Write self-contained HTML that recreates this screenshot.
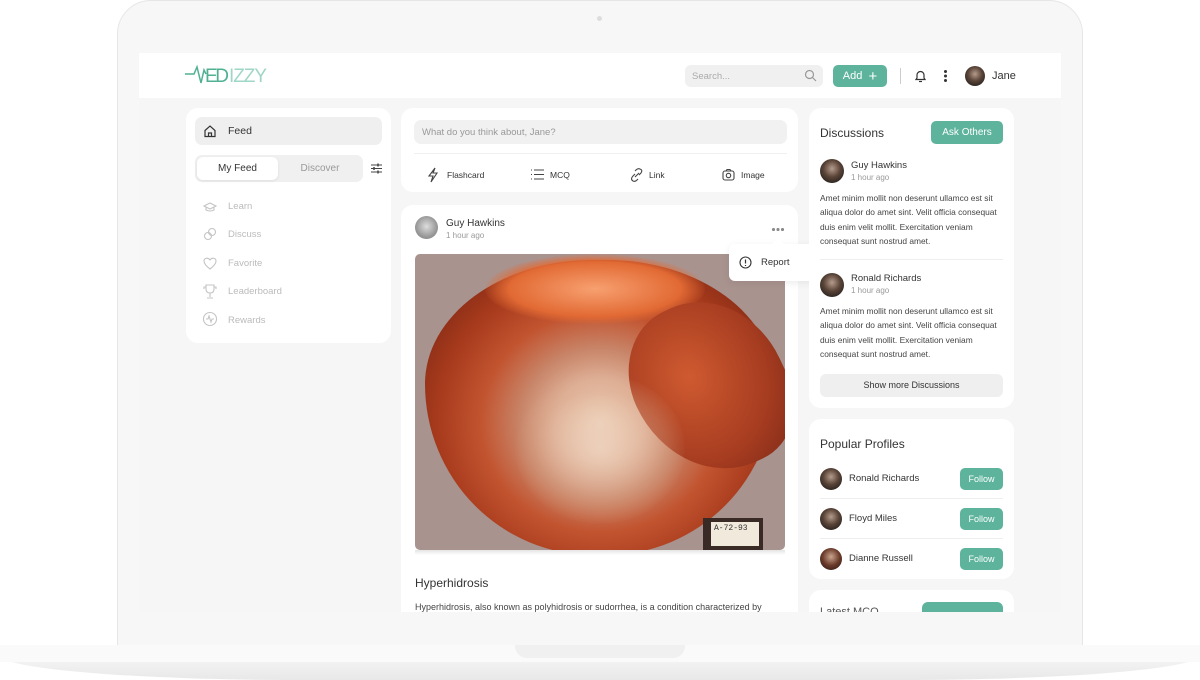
<!DOCTYPE html>
<html><head><meta charset="utf-8"><style>
*{box-sizing:border-box;margin:0;padding:0}
body{width:1200px;height:680px;background:#fff;position:relative;overflow:hidden;font-family:"Liberation Sans",sans-serif;color:#333}
.a{position:absolute}
.card{position:absolute;background:#fff;border-radius:12px}
.g{color:#bbb;font-size:9.5px}
.btn{position:absolute;background:#5db39b;color:#fff;border-radius:5px;font-size:10px;display:flex;align-items:center;justify-content:center}
.av{position:absolute;border-radius:50%;background:radial-gradient(circle at 50% 40%,#b59c8c 0,#5a4438 45%,#2c2420 80%)}
.t9{font-size:9px;line-height:14.3px;color:#444}
svg{position:absolute}
</style></head><body>
<div class="a" style="left:117px;top:0;width:966px;height:660px;background:#f7f7f7;border:1px solid #e6e6e6;border-radius:34px 34px 0 0"></div>
<div class="a" style="left:597px;top:16px;width:5px;height:5px;border-radius:50%;background:#ddd"></div>
<div class="a" style="left:0;top:645px;width:1200px;height:35px;background:linear-gradient(#fbfbfb,#f0f0f0 60%,#e8e8e8);border-radius:0 0 300px 300px/0 0 25px 25px"></div>
<div class="a" style="left:0;top:645px;width:1200px;height:17px;background:#fafafa"></div>
<div class="a" style="left:515px;top:645px;width:170px;height:13px;background:#f0f0f0;border-radius:0 0 12px 12px"></div>
<div class="a" style="left:139px;top:53px;width:922px;height:559px;background:#f6f6f6;overflow:hidden">
 <div class="a" style="left:0;top:0;width:922px;height:45px;background:#fff"></div>
</div>
<svg style="left:184px;top:64px" width="86" height="22" viewBox="0 0 86 22"><path d="M1 10H10L13 3L17 19L20 6L22 10" fill="none" stroke="#4fb092" stroke-width="1.5"/>
<text x="21" y="18" font-size="19" fill="#4fb092" font-family="Liberation Sans" textLength="24">ED</text><text x="45" y="18" font-size="19" fill="#9fd6c6" font-family="Liberation Sans" textLength="38">IZZY</text></svg>
<div class="a" style="left:685px;top:65px;width:138px;height:22px;background:#f0f0f0;border-radius:6px;font-size:9.5px;color:#aaa;padding:6px 7px">Search...</div>
<svg style="left:804px;top:69px" width="13" height="13" viewBox="0 0 13 13"><circle cx="5.5" cy="5.5" r="4" fill="none" stroke="#999" stroke-width="1.2"/><path d="M8.5 8.5L12 12" stroke="#999" stroke-width="1.2"/></svg>
<div class="btn" style="left:833px;top:65px;width:54px;height:22px;font-size:11px;border-radius:5px">Add&nbsp;&nbsp;<span style="font-size:15px;line-height:1">+</span></div>
<div class="a" style="left:900px;top:68px;width:1px;height:16px;background:#ccc"></div>
<svg style="left:914px;top:69px" width="13" height="14" viewBox="0 0 13 14"><path d="M2 10.5H11L10 9V6A3.5 3.5 0 0 0 3 6V9Z" fill="none" stroke="#333" stroke-width="1.2"/><path d="M5 12.5H8" stroke="#333" stroke-width="1.2"/></svg>
<div class="a" style="left:944px;top:70px;width:3px;height:3px;border-radius:50%;background:#333;box-shadow:0 4.5px #333,0 9px #333"></div>
<div class="av" style="left:965px;top:66px;width:20px;height:20px"></div>
<div class="a" style="left:992px;top:70px;font-size:11px;color:#333">Jane</div>
<div class="card" style="left:186px;top:108px;width:205px;height:235px"></div>
<div class="a" style="left:195px;top:117px;width:187px;height:28px;background:#efefef;border-radius:7px"></div>
<svg style="left:203px;top:124px" width="14" height="14" viewBox="0 0 14 14"><path d="M2 6.5L7 2L12 6.5V12.5H2Z M5.5 12.5V9H8.5V12.5" fill="none" stroke="#333" stroke-width="1.2"/></svg>
<div class="a" style="left:228px;top:125px;font-size:10.5px;color:#333">Feed</div>
<div class="a" style="left:195px;top:155px;width:168px;height:27px;background:#f0f0f0;border-radius:7px"></div>
<div class="a" style="left:197px;top:157px;width:81px;height:23px;background:#fff;border-radius:6px;box-shadow:0 1px 3px rgba(0,0,0,.08);font-size:10px;text-align:center;line-height:23px;color:#333">My Feed</div>
<div class="a" style="left:280px;top:163px;width:80px;text-align:center;font-size:10px;color:#999">Discover</div>
<svg style="left:370px;top:162px" width="13" height="13" viewBox="0 0 13 13" stroke="#444" stroke-width="1.1"><path d="M1 3H12M1 6.5H12M1 10H12"/><path d="M8 1.5V4.5M4 5V8M8 8.5V11.5" stroke-width="1.5"/></svg>
<div class="a g" style="left:228px;top:201px">Learn</div>
<div class="a g" style="left:228px;top:229px">Discuss</div>
<div class="a g" style="left:228px;top:258px">Favorite</div>
<div class="a g" style="left:228px;top:286px">Leaderboard</div>
<div class="a g" style="left:228px;top:315px">Rewards</div>
<svg style="left:202px;top:198px" width="16" height="130" viewBox="0 0 16 130" fill="none" stroke="#c4c4c4" stroke-width="1.1"><path d="M2 8L8 5L14 8L8 11Z M4 9V12Q8 14 12 12V9"/><circle cx="6" cy="38" r="3.5"/><circle cx="10" cy="34" r="3.5"/><path d="M8 71C4 68 2 65 2 63C2 60 6 59 8 62C10 59 14 60 14 63C14 65 12 68 8 71Z"/><path d="M4 87H12V91Q12 95 8 95Q4 95 4 91Z M8 95V99M5 100H11M4 89H2V91M12 89H14V91"/><circle cx="8" cy="121" r="6.5"/><path d="M4 121H6L7 118L9 124L10 121H12"/></svg>
<div class="card" style="left:401px;top:108px;width:397px;height:84px"></div>
<div class="a" style="left:414px;top:120px;width:373px;height:24px;background:#f1f1f1;border-radius:7px;font-size:9.5px;color:#999;padding:7px 8px">What do you think about, Jane?</div>
<div class="a" style="left:414px;top:153px;width:373px;height:1px;background:#f0f0f0"></div>
<div class="a" style="font-size:8.5px;color:#333;top:170px;left:447px">Flashcard</div>
<div class="a" style="font-size:8.5px;color:#333;top:170px;left:550px">MCQ</div>
<div class="a" style="font-size:8.5px;color:#333;top:170px;left:649px">Link</div>
<div class="a" style="font-size:8.5px;color:#333;top:170px;left:741px">Image</div>
<svg style="left:426px;top:167px" width="330" height="16" viewBox="0 0 330 16" fill="none" stroke="#444" stroke-width="1.1"><path d="M9 1L3 9H7L5 15L11 6H7Z"/><path d="M108 3H118M108 7.5H118M108 12H118M105 3H106M105 7.5H106M105 12H106"/><path d="M209 7L207 9Q204 12 207 14Q209 15 211 13L212 12M213 8L215 6Q217 3 214 2Q212 1 210 3L209 4M209 10L213 6"/><rect x="297" y="4" width="11" height="9" rx="2"/><circle cx="302.5" cy="8.5" r="2.2"/><path d="M300 4L301 2.5H304L305 4"/></svg>
<div class="a" style="left:401px;top:205px;width:397px;height:407px;background:#fff;border-radius:12px 12px 0 0"></div>
<div class="av" style="left:415px;top:216px;width:23px;height:23px;background:radial-gradient(circle at 50% 45%,#ddd 0,#999 60%,#777 100%)"></div>
<div class="a" style="left:446px;top:218px;font-size:10px;color:#333">Guy Hawkins</div>
<div class="a" style="left:446px;top:231px;font-size:8px;color:#999">1 hour ago</div>
<div class="a" style="left:772px;top:228px;width:2.5px;height:2.5px;border-radius:50%;background:#888;box-shadow:4.5px 0 #888,9px 0 #888"></div>
<div class="a" style="left:415px;top:254px;width:370px;height:296px;border-radius:5px;overflow:hidden;background:#a9938f">
 <div class="a" style="left:10px;top:6px;width:350px;height:295px;border-radius:48% 48% 48% 48%/42% 42% 58% 58%;background:radial-gradient(ellipse at 50% 55%,#f0d6c0 0,#dfb299 18%,#c88569 32%,#c25430 48%,#a73a1c 66%,#6e2212 92%)"></div>
 <div class="a" style="left:70px;top:0;width:220px;height:70px;border-radius:50%;background:radial-gradient(#f7a070,#e26a34 55%,transparent 72%)"></div>
 <div class="a" style="left:220px;top:45px;width:150px;height:175px;border-radius:45% 55% 40% 60%;background:radial-gradient(ellipse at 40% 40%,#cf5a30,#a63c20 60%,#762616);transform:rotate(-25deg)"></div>
 <div class="a" style="left:100px;top:120px;width:170px;height:150px;border-radius:50%;background:radial-gradient(rgba(240,215,195,.7),rgba(220,170,140,.3) 55%,transparent 72%)"></div>
 <div class="a" style="left:288px;top:264px;width:60px;height:32px;background:#3a2a26"></div>
 <div class="a" style="left:296px;top:268px;width:48px;height:24px;background:#f1e9dc;font-size:8px;color:#333;padding:2px 3px;font-family:'Liberation Mono',monospace">A-72-93</div>
</div>
<div class="a" style="left:415px;top:550px;width:370px;height:5px;background:linear-gradient(#e4e4e4,#fff)"></div>
<div class="a" style="left:415px;top:576px;font-size:12px;color:#333">Hyperhidrosis</div>
<div class="a" style="left:415px;top:602px;width:370px;height:10px;overflow:hidden;font-size:9px;color:#444;white-space:nowrap">Hyperhidrosis, also known as polyhidrosis or sudorrhea, is a condition characterized by</div>
<div class="a" style="left:729px;top:244px;width:99px;height:37px;background:#fff;border-radius:6px;box-shadow:0 2px 8px rgba(0,0,0,.08)"></div>
<div class="a" style="left:774px;top:240px;width:8px;height:8px;background:#fff;transform:rotate(45deg)"></div>
<svg style="left:739px;top:256px" width="13" height="13" viewBox="0 0 13 13"><circle cx="6.5" cy="6.5" r="5.5" fill="none" stroke="#333" stroke-width="1.1"/><path d="M6.5 3.5V7.5M6.5 9V10" stroke="#333" stroke-width="1.2"/></svg>
<div class="a" style="left:761px;top:257px;font-size:9.5px;color:#333">Report</div>
<div class="card" style="left:809px;top:108px;width:205px;height:300px"></div>
<div class="a" style="left:820px;top:126px;font-size:12px;color:#333">Discussions</div>
<div class="btn" style="left:931px;top:121px;width:72px;height:23px;font-size:10px">Ask Others</div>
<div class="av" style="left:820px;top:159px;width:24px;height:24px"></div>
<div class="a" style="left:851px;top:160px;font-size:9.5px;color:#333">Guy Hawkins</div>
<div class="a" style="left:851px;top:173px;font-size:8px;color:#999">1 hour ago</div>
<div class="a t9" style="left:820px;top:191px;width:190px;font-size:8.4px">Amet minim mollit non deserunt ullamco est sit aliqua dolor do amet sint. Velit officia consequat duis enim velit mollit. Exercitation veniam consequat sunt nostrud amet.</div>
<div class="a" style="left:820px;top:259px;width:183px;height:1px;background:#eee"></div>
<div class="av" style="left:820px;top:273px;width:24px;height:24px"></div>
<div class="a" style="left:851px;top:273px;font-size:9.5px;color:#333">Ronald Richards</div>
<div class="a" style="left:851px;top:286px;font-size:8px;color:#999">1 hour ago</div>
<div class="a t9" style="left:820px;top:304px;width:190px;font-size:8.4px">Amet minim mollit non deserunt ullamco est sit aliqua dolor do amet sint. Velit officia consequat duis enim velit mollit. Exercitation veniam consequat sunt nostrud amet.</div>
<div class="a" style="left:820px;top:374px;width:183px;height:23px;background:#efefef;border-radius:6px;font-size:9px;color:#333;text-align:center;line-height:23px">Show more Discussions</div>
<div class="card" style="left:809px;top:419px;width:205px;height:160px"></div>
<div class="a" style="left:820px;top:437px;font-size:12px;color:#333">Popular Profiles</div>
<div class="av" style="left:820px;top:468px;width:22px;height:22px"></div>
<div class="a" style="left:849px;top:473px;font-size:9.5px;color:#333">Ronald Richards</div>
<div class="btn" style="left:960px;top:468px;width:43px;height:22px;font-size:9px">Follow</div>
<div class="a" style="left:820px;top:498px;width:183px;height:1px;background:#eee"></div>
<div class="av" style="left:820px;top:508px;width:22px;height:22px"></div>
<div class="a" style="left:849px;top:513px;font-size:9.5px;color:#333">Floyd Miles</div>
<div class="btn" style="left:960px;top:508px;width:43px;height:22px;font-size:9px">Follow</div>
<div class="a" style="left:820px;top:538px;width:183px;height:1px;background:#eee"></div>
<div class="av" style="left:820px;top:548px;width:22px;height:22px;background:radial-gradient(circle at 50% 40%,#caa58e 0,#6b3b2a 50%,#3a2018 85%)"></div>
<div class="a" style="left:849px;top:553px;font-size:9.5px;color:#333">Dianne Russell</div>
<div class="btn" style="left:960px;top:548px;width:43px;height:22px;font-size:9px">Follow</div>
<div class="a" style="left:809px;top:590px;width:205px;height:22px;background:#fff;border-radius:12px 12px 0 0"></div>
<div class="a" style="left:922px;top:602px;width:81px;height:10px;background:#5db39b;border-radius:6px 6px 0 0"></div>
<div class="a" style="left:820px;top:606px;font-size:11px;color:#555;height:6px;overflow:hidden">Latest MCQ</div>
</body></html>
